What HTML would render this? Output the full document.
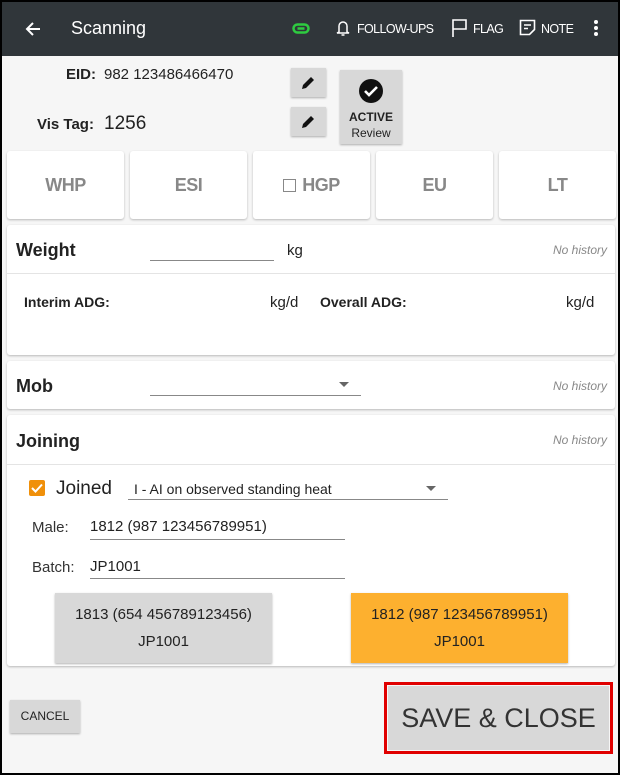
<!DOCTYPE html>
<html><head><style>
*{margin:0;padding:0;box-sizing:border-box}
body{width:620px;height:775px;overflow:hidden;background:#000;font-family:"Liberation Sans",sans-serif;color:#222}
#f{position:absolute;left:2px;top:2px;width:616px;height:771px;background:#f6f6f6;overflow:hidden}
.a{position:absolute}
.hdr{left:0;top:0;width:616px;height:54px;background:#30363a;color:#fff}
.card{background:#fff;border-radius:3px;box-shadow:0 1px 2px rgba(0,0,0,.25)}
.tag{top:149px;width:117px;height:68px;display:flex;align-items:center;justify-content:center;font-size:18px;font-weight:bold;color:#888;letter-spacing:-0.5px}
.nh{font-size:12px;font-style:italic;color:#888}
.ul{border-bottom:1px solid #888}
.btn{background:#d8d8d8;box-shadow:0 1px 2px rgba(0,0,0,.3)}
.ht{font-size:12.5px;letter-spacing:-0.6px}
</style></head><body><div id="f">
<div class="a hdr">
 <svg class="a" style="left:22px;top:18px" width="18" height="18" viewBox="0 0 18 18"><path d="M16 9H3M9 3L3 9l6 6" stroke="#fff" stroke-width="2" fill="none"/></svg>
 <div class="a" style="left:69px;top:16px;font-size:18px">Scanning</div>
 <svg class="a" style="left:290px;top:21px" width="18" height="11" viewBox="0 0 18 11"><rect x="1.5" y="1.5" width="15" height="8" rx="4" stroke="#2ecc40" stroke-width="2.5" fill="none"/><path d="M5.5 5.5h7" stroke="#2ecc40" stroke-width="2.5"/></svg>
 <svg class="a" style="left:334px;top:17px" width="14" height="18" viewBox="0 0 14 18"><path d="M3 13V7a4 4 0 018 0v6l2 1H1zM5.5 16h3" stroke="#fff" stroke-width="1.5" fill="none"/></svg>
 <div class="a ht" style="left:355px;top:20px">FOLLOW-UPS</div>
 <svg class="a" style="left:449px;top:16px" width="16" height="20" viewBox="0 0 16 20"><path d="M2 19V2h13v9H2" stroke="#fff" stroke-width="1.6" fill="none"/></svg>
 <div class="a ht" style="left:471px;top:20px">FLAG</div>
 <svg class="a" style="left:517px;top:17px" width="17" height="17" viewBox="0 0 17 17"><path d="M1.5 1.5h14v9l-5 5h-9zM5 6h7M5 9.5h4" stroke="#fff" stroke-width="1.6" fill="none"/></svg>
 <div class="a ht" style="left:539px;top:20px">NOTE</div>
 <div class="a" style="left:592px;top:18px;width:4px;height:4px;background:#fff;border-radius:2px;box-shadow:0 6px 0 #fff,0 12px 0 #fff"></div>
</div>
<div class="a" style="left:64px;top:64px;font-size:15px;font-weight:bold">EID:</div>
<div class="a" style="left:102px;top:64px;font-size:15px">982 123486466470</div>
<div class="a" style="left:35px;top:114px;font-size:15px;font-weight:bold">Vis Tag:</div>
<div class="a" style="left:102px;top:111px;font-size:19px">1256</div>
<div class="a btn" style="left:289px;top:66px;width:35px;height:29px"><svg class="a" style="left:10px;top:7px" width="15" height="15" viewBox="0 0 15 15"><path d="M1 14l1-4 8-8 3 3-8 8z" fill="#111"/></svg></div>
<div class="a btn" style="left:289px;top:105px;width:35px;height:29px"><svg class="a" style="left:10px;top:7px" width="15" height="15" viewBox="0 0 15 15"><path d="M1 14l1-4 8-8 3 3-8 8z" fill="#111"/></svg></div>
<div class="a btn" style="left:338px;top:68px;width:62px;height:74px;text-align:center">
 <svg style="margin-top:8px" width="26" height="26" viewBox="0 0 26 26"><circle cx="13" cy="13" r="12" fill="#111"/><path d="M7 13l4 4 8-8" stroke="#fff" stroke-width="2.6" fill="none"/></svg>
 <div style="font-size:12px;font-weight:bold;margin-top:1px">ACTIVE</div>
 <div style="font-size:12px;margin-top:2px">Review</div>
</div>
<div class="a card tag" style="left:5px">WHP</div>
<div class="a card tag" style="left:128px">ESI</div>
<div class="a card tag" style="left:251px"><span style="display:inline-block;width:13px;height:13px;border:1.5px solid #888;margin-right:6px"></span>HGP</div>
<div class="a card tag" style="left:374px">EU</div>
<div class="a card tag" style="left:497px">LT</div>

<div class="a card" style="left:5px;top:223px;width:608px;height:130px"></div>
<div class="a" style="left:14px;top:238px;font-size:18px;font-weight:bold">Weight</div>
<div class="a ul" style="left:148px;top:258px;width:124px"></div>
<div class="a" style="left:285px;top:240px;font-size:15px">kg</div>
<div class="a nh" style="left:551px;top:241px">No history</div>
<div class="a" style="left:5px;top:271px;width:608px;border-top:1px solid #e4e4e4"></div>
<div class="a" style="left:22px;top:292px;font-size:14px;font-weight:bold">Interim ADG:</div>
<div class="a" style="left:268px;top:292px;font-size:15px">kg/d</div>
<div class="a" style="left:318px;top:292px;font-size:14px;font-weight:bold">Overall ADG:</div>
<div class="a" style="left:564px;top:292px;font-size:15px">kg/d</div>

<div class="a card" style="left:5px;top:359px;width:608px;height:48px"></div>
<div class="a" style="left:14px;top:374px;font-size:18px;font-weight:bold">Mob</div>
<div class="a ul" style="left:148px;top:393px;width:211px"></div>
<div class="a" style="left:337px;top:380px;width:0;height:0;border:5px solid transparent;border-top-color:#666"></div>
<div class="a nh" style="left:551px;top:377px">No history</div>

<div class="a card" style="left:5px;top:413px;width:608px;height:251px"></div>
<div class="a" style="left:14px;top:429px;font-size:18px;font-weight:bold">Joining</div>
<div class="a nh" style="left:551px;top:431px">No history</div>
<div class="a" style="left:5px;top:462px;width:608px;border-top:1px solid #e4e4e4"></div>
<div class="a" style="left:27px;top:478px;width:16px;height:16px;background:#f0900a;border-radius:2px"><svg width="16" height="16" viewBox="0 0 16 16"><path d="M3 8l3.5 3.5L13 4.5" stroke="#fff" stroke-width="2" fill="none"/></svg></div>
<div class="a" style="left:54px;top:476px;font-size:19px">Joined</div>
<div class="a ul" style="left:126px;top:497px;width:320px"></div>
<div class="a" style="left:132px;top:479px;font-size:14px">I - AI on observed standing heat</div>
<div class="a" style="left:424px;top:484px;width:0;height:0;border:5px solid transparent;border-top-color:#666"></div>
<div class="a" style="left:30px;top:517px;font-size:15px;color:#333">Male:</div>
<div class="a" style="left:88px;top:516px;font-size:15px">1812 (987 123456789951)</div>
<div class="a ul" style="left:88px;top:537px;width:255px"></div>
<div class="a" style="left:30px;top:557px;font-size:15px;color:#333">Batch:</div>
<div class="a" style="left:88px;top:556px;font-size:15px">JP1001</div>
<div class="a ul" style="left:88px;top:576px;width:255px"></div>
<div class="a btn" style="left:53px;top:591px;width:217px;height:70px;text-align:center;font-size:15px;line-height:27px;padding-top:8px">1813 (654 456789123456)<br>JP1001</div>
<div class="a" style="left:349px;top:591px;width:217px;height:70px;text-align:center;font-size:15px;line-height:27px;padding-top:8px;background:#fdb02f;box-shadow:0 1px 2px rgba(0,0,0,.3)">1812 (987 123456789951)<br>JP1001</div>

<div class="a btn" style="left:8px;top:698px;width:70px;height:33px;font-size:12px;line-height:33px;text-align:center">CANCEL</div>
<div class="a" style="left:382px;top:680px;width:229px;height:72px;border:3px solid #e00000"></div>
<div class="a" style="left:386px;top:684px;width:221px;height:64px;background:#d8d8d8;font-size:27px;line-height:64px;text-align:center;color:#333">SAVE &amp; CLOSE</div>
</div></body></html>
